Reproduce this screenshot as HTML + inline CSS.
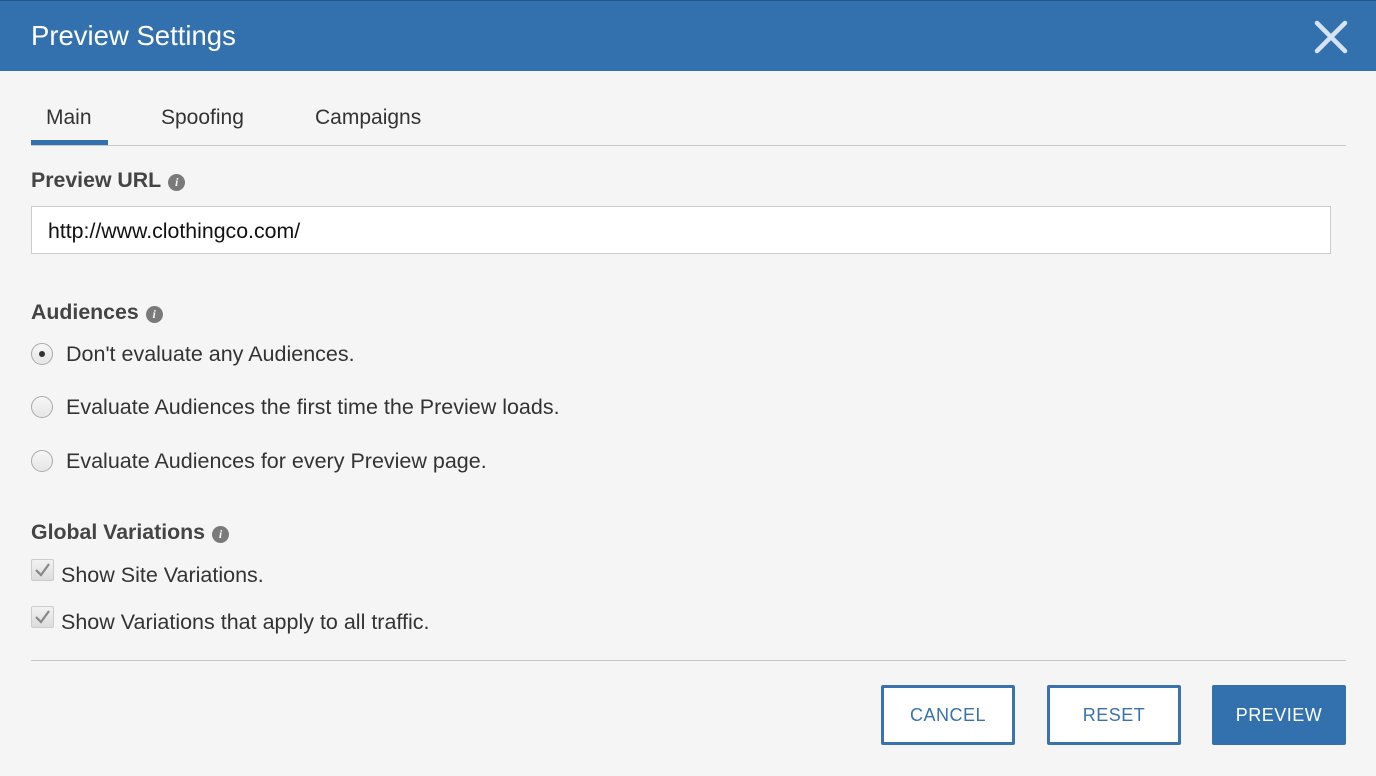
<!DOCTYPE html>
<html><head><meta charset="utf-8"><style>
*{box-sizing:border-box;margin:0;padding:0}
body{width:1376px;height:776px;background:#f5f5f5;font-family:"Liberation Sans",Arial,sans-serif;color:#333;position:relative;overflow:hidden}
.a{position:absolute;white-space:nowrap}
.hdr{left:0;top:0;width:1376px;height:71px;background:#3371ae;border-top:1px solid #24578a}
.t{font-size:21.5px;color:#333}
.lbl{font-size:21.3px;font-weight:bold;color:#444}
.info{display:inline-block;width:17px;height:17px;border-radius:50%;background:#7a7a7a;color:#f5f5f5;font-size:12px;font-style:italic;font-weight:bold;text-align:center;line-height:17px;vertical-align:1px;margin-left:7px;font-family:"Liberation Serif",serif}
.radio{width:22px;height:22px;border-radius:50%;border:1px solid #aaa;background:linear-gradient(#f6f6f6,#e6e6e6)}
.cb{width:23px;height:22px;border:1px solid #ccc;border-radius:2px;background:linear-gradient(#f2f2f2,#dcdcdc)}
.btn{top:685px;width:134px;height:60px;border:3px solid #3a72ad;border-radius:2px;background:#fff;color:#3a72ad;font-size:18px;text-align:center;line-height:54px;letter-spacing:.5px}
</style></head><body>
<div class="a hdr"></div>
<div class="a" style="left:31px;top:20px;font-size:27.5px;color:#fff">Preview Settings</div>
<svg class="a" style="left:1313px;top:19px" width="36" height="36"><path d="M4 4L32 32M32 4L4 32" stroke="#d6e4f1" stroke-width="4.5" stroke-linecap="round"/></svg>

<div class="a t" style="left:46px;top:106px;font-size:21px">Main</div>
<div class="a t" style="left:161px;top:106px;font-size:21px">Spoofing</div>
<div class="a t" style="left:315px;top:106px;font-size:21px">Campaigns</div>
<div class="a" style="left:31px;top:145px;width:1315px;height:1px;background:#c8c8c8"></div>
<div class="a" style="left:31px;top:140px;width:77px;height:5px;background:#3371ae"></div>

<div class="a lbl" style="left:31px;top:168px">Preview URL<span class="info">i</span></div>
<div class="a" style="left:31px;top:206px;width:1300px;height:48px;background:#fff;border:1px solid #ccc"></div>
<div class="a" style="left:48px;top:219px;font-size:21.3px;color:#111">http://www.clothingco.com/</div>

<div class="a lbl" style="left:31px;top:300px">Audiences<span class="info">i</span></div>
<div class="a radio" style="left:31px;top:343px"><div style="position:absolute;left:7px;top:7px;width:6px;height:6px;border-radius:50%;background:#333"></div></div>
<div class="a t" style="left:66px;top:342px">Don't evaluate any Audiences.</div>
<div class="a radio" style="left:31px;top:396px"></div>
<div class="a t" style="left:66px;top:395px">Evaluate Audiences the first time the Preview loads.</div>
<div class="a radio" style="left:31px;top:450px"></div>
<div class="a t" style="left:66px;top:449px">Evaluate Audiences for every Preview page.</div>

<div class="a lbl" style="left:31px;top:520px">Global Variations<span class="info">i</span></div>
<div class="a cb" style="left:31px;top:559px"><svg width="21" height="20" style="position:absolute;left:0;top:0"><path d="M4 10L9 15L17 4" stroke="#888" stroke-width="2.2" fill="none"/></svg></div>
<div class="a t" style="left:61px;top:563px">Show Site Variations.</div>
<div class="a cb" style="left:31px;top:606px"><svg width="21" height="20" style="position:absolute;left:0;top:0"><path d="M4 10L9 15L17 4" stroke="#888" stroke-width="2.2" fill="none"/></svg></div>
<div class="a t" style="left:61px;top:610px">Show Variations that apply to all traffic.</div>

<div class="a" style="left:31px;top:660px;width:1315px;height:1px;background:#c8c8c8"></div>
<div class="a btn" style="left:881px">CANCEL</div>
<div class="a btn" style="left:1047px">RESET</div>
<div class="a btn" style="left:1212px;background:#3371ae;border-color:#3371ae;color:#fff">PREVIEW</div>
</body></html>
